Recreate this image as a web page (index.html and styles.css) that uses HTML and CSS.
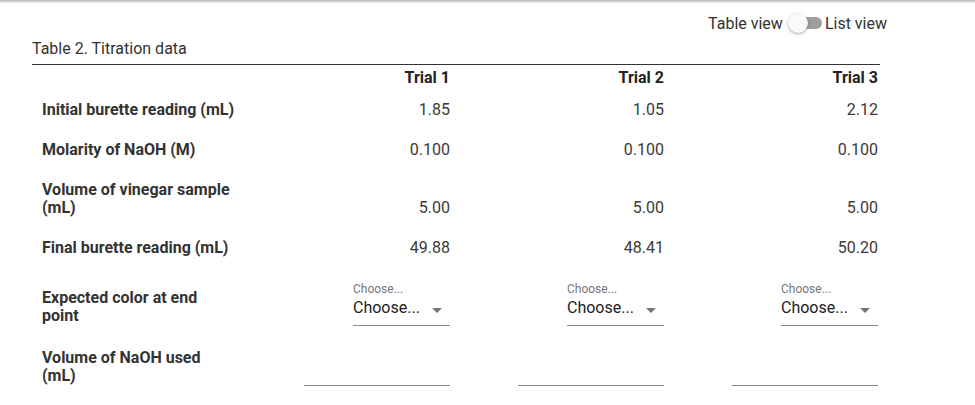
FILE: index.html
```html
<!DOCTYPE html>
<html>
<head>
<meta charset="utf-8">
<link rel="stylesheet" href="styles.css">
</head>
<body>
<div class="topshadow"></div>
<div class="page">
  <div class="toggle-row">
    <span class="toggle-label">Table view</span>
    <span class="switch"><span class="track"></span><span class="thumb"></span></span>
    <span class="toggle-label">List view</span>
  </div>
  <div class="caption">Table 2. Titration data</div>
  <table class="data">
    <colgroup>
      <col class="c-label"><col class="c-trial"><col class="c-trial"><col class="c-trial">
    </colgroup>
    <thead>
      <tr><th></th><th>Trial 1</th><th>Trial 2</th><th>Trial 3</th></tr>
    </thead>
    <tbody>
      <tr><td class="lbl"><div class="lbl-text">Initial burette reading (mL)</div></td><td class="num">1.85</td><td class="num">1.05</td><td class="num">2.12</td></tr>
      <tr><td class="lbl"><div class="lbl-text">Molarity of NaOH (M)</div></td><td class="num">0.100</td><td class="num">0.100</td><td class="num">0.100</td></tr>
      <tr><td class="lbl"><div class="lbl-text">Volume of vinegar sample (mL)</div></td><td class="num bottom">5.00</td><td class="num bottom">5.00</td><td class="num bottom">5.00</td></tr>
      <tr><td class="lbl"><div class="lbl-text">Final burette reading (mL)</div></td><td class="num">49.88</td><td class="num">48.41</td><td class="num">50.20</td></tr>
      <tr class="sel-row">
        <td class="lbl"><div class="lbl-text">Expected color at end point</div></td>
        <td class="ctl"><div class="select"><span class="sel-hint">Choose...</span><span class="sel-value">Choose...<span class="caret"></span></span></div></td>
        <td class="ctl"><div class="select"><span class="sel-hint">Choose...</span><span class="sel-value">Choose...<span class="caret"></span></span></div></td>
        <td class="ctl"><div class="select"><span class="sel-hint">Choose...</span><span class="sel-value">Choose...<span class="caret"></span></span></div></td>
      </tr>
      <tr class="inp-row">
        <td class="lbl"><div class="lbl-text">Volume of NaOH used (mL)</div></td>
        <td class="ctl bottom"><div class="input"></div></td>
        <td class="ctl bottom"><div class="input"></div></td>
        <td class="ctl bottom"><div class="input"></div></td>
      </tr>
    </tbody>
  </table>
</div>
</body>
</html>
```

FILE: styles.css
```css
html, body {
  margin: 0;
  padding: 0;
  background: #fff;
  font-family: Roboto, "Liberation Sans", sans-serif;
  color: #333;
}

.topshadow {
  height: 4px;
  background: linear-gradient(to bottom, #b5b5b5 0, #d8d8d8 1.5px, #f4f4f4 3px, #fff 4px);
}

.page {
  padding: 0 95px 0 32px;
}

.toggle-row {
  display: flex;
  justify-content: flex-end;
  align-items: center;
  margin-right: -7px;
  margin-top: 8px;
  height: 22px;
  font-size: 16px;
  color: #333;
}

.switch {
  position: relative;
  width: 34px;
  height: 22px;
  margin: 0 3px 0 5px;
}

.track {
  position: absolute;
  left: 4px;
  right: 0;
  top: 5px;
  height: 12px;
  border-radius: 6px;
  background: #9e9e9e;
}

.thumb {
  position: absolute;
  left: 0;
  top: 1px;
  width: 20px;
  height: 20px;
  border-radius: 50%;
  background: #fafafa;
  box-shadow: 0 1px 3px rgba(0,0,0,0.35);
}

.caption {
  margin-top: 6px;
  font-size: 16px;
  line-height: 18px;
  padding-bottom: 6px;
  border-bottom: 1px solid #333;
}

.data {
  width: 848px;
  border-collapse: collapse;
  table-layout: fixed;
  font-size: 16px;
}

.c-label { width: 206px; }
.c-trial { width: 214px; }

.data th {
  font-weight: bold;
  text-align: right;
  padding: 4px 2px 3px 0;
  line-height: 18px;
  color: #222;
}

.data td {
  padding: 11px 2px 11px 0;
  line-height: 18px;
  vertical-align: middle;
}

.data td.lbl {
  padding-left: 10px;
  font-weight: bold;
  color: #333;
}

.data td.num {
  text-align: right;
  color: #3a3a3a;
}

.data td.bottom {
  vertical-align: bottom;
}

.sel-row td.lbl {
  padding-top: 21px;
  padding-bottom: 15px;
}

.sel-row td.ctl {
  vertical-align: top;
  padding-top: 14px;
  padding-bottom: 14px;
}

.select {
  margin-left: auto;
  width: 97px;
  border-bottom: 1px solid #8a8a8a;
  display: flex;
  flex-direction: column;
}

.sel-hint {
  font-size: 12px;
  line-height: 14px;
  color: #777;
}

.sel-value {
  position: relative;
  font-size: 16px;
  line-height: 20px;
  color: #212121;
  padding: 2px 0 7px 0;
}

.caret {
  position: absolute;
  right: 8px;
  top: 12px;
  width: 0;
  height: 0;
  border-left: 5px solid transparent;
  border-right: 5px solid transparent;
  border-top: 5px solid #757575;
}

.inp-row td.lbl {
  padding-top: 9px;
  padding-bottom: 5px;
}

.inp-row td.ctl {
  padding-bottom: 4px;
}

.input {
  margin-left: auto;
  width: 146px;
  height: 28px;
  border-bottom: 1px solid #8a8a8a;
}
```
